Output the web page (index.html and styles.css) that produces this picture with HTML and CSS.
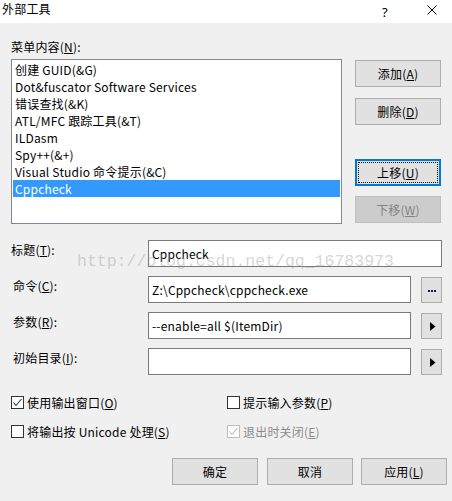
FILE: index.html
```html
<!DOCTYPE html>
<html lang="zh-CN">
<head>
    <meta charset="UTF-8">
    <title>外部工具</title>
    <link rel="stylesheet" href="styles.css">
</head>
<body>
    <div class="titlebar">
        <span class="title">外部工具</span>
        <span class="help">?</span>
        <span class="close">
            <svg width="10" height="10" viewBox="0 0 10 10"><path d="M0.5 0.5L9.5 9.5M9.5 0.5L0.5 9.5" stroke="#000" stroke-width="1"/></svg>
        </span>
    </div>

    <div class="content">
        <div class="menu-label">菜单内容(<u>N</u>):</div>
        <div class="menu-row">
            <ul class="listbox">
                <li>创建 GUID(&amp;G)</li>
                <li>Dot&amp;fuscator Software Services</li>
                <li>错误查找(&amp;K)</li>
                <li>ATL/MFC 跟踪工具(&amp;T)</li>
                <li>ILDasm</li>
                <li>Spy++(&amp;+)</li>
                <li>Visual Studio 命令提示(&amp;C)</li>
                <li class="selected">Cppcheck</li>
            </ul>
            <div class="side-buttons">
                <button class="btn">添加(<u>A</u>)</button>
                <button class="btn btn-del">删除(<u>D</u>)</button>
                <button class="btn btn-up default">上移(<u>U</u>)</button>
                <button class="btn btn-down" disabled>下移(<u>W</u>)</button>
            </div>
        </div>

        <div class="fields">
            <label class="field-label first">标题(<u>T</u>):</label>
            <div class="textbox wide">Cppcheck</div>

            <label class="field-label">命令(<u>C</u>):</label>
            <div class="textbox">Z:\Cppcheck\cppcheck.exe</div>
            <button class="mini-btn">
                <svg width="8" height="2" viewBox="0 0 8 2"><rect x="0" y="0" width="2" height="2" fill="#1a1a3a"/><rect x="3" y="0" width="2" height="2" fill="#1a1a3a"/><rect x="6" y="0" width="2" height="2" fill="#1a1a3a"/></svg>
            </button>

            <label class="field-label">参数(<u>R</u>):</label>
            <div class="textbox">--enable=all $(ItemDir)</div>
            <button class="mini-btn arrow">
                <svg width="6" height="9" viewBox="0 0 6 9"><path d="M0 0L5.5 4.5L0 9Z" fill="#000"/></svg>
            </button>

            <label class="field-label">初始目录(<u>I</u>):</label>
            <div class="textbox"></div>
            <button class="mini-btn arrow">
                <svg width="6" height="9" viewBox="0 0 6 9"><path d="M0 0L5.5 4.5L0 9Z" fill="#000"/></svg>
            </button>

            <span class="watermark">http://blog.csdn.net/qq_16783973</span>
        </div>

        <div class="options">
            <div class="check">
                <span class="box"><svg width="11" height="11" viewBox="0 0 11 11"><path d="M1.5 5.5L4 8.5L9.5 2" fill="none" stroke="#333" stroke-width="1.1"/></svg></span>
                使用输出窗口(<u>O</u>)
            </div>
            <div class="check">
                <span class="box"></span>
                提示输入参数(<u>P</u>)
            </div>
            <div class="check">
                <span class="box"></span>
                将输出按 Unicode 处理(<u>S</u>)
            </div>
            <div class="check disabled">
                <span class="box"><svg width="11" height="11" viewBox="0 0 11 11"><path d="M1.5 5.5L4 8.5L9.5 2" fill="none" stroke="#bcbcbc" stroke-width="1.1"/></svg></span>
                退出时关闭(<u>E</u>)
            </div>
        </div>

        <div class="footer">
            <button class="btn ok">确定</button>
            <button class="btn">取消</button>
            <button class="btn">应用(<u>L</u>)</button>
        </div>
    </div>
</body>
</html>
```

FILE: styles.css
```css
*{
    margin: 0;
    padding: 0;
    box-sizing: border-box;
}
body{
    width: 452px;
    height: 501px;
    overflow: hidden;
    background: #f0f0f0;
    color: #000;
    font: 12px "Noto Sans CJK SC", "Noto Sans", sans-serif;
    letter-spacing: 0.2px;
}
u{
    text-underline-offset: 1px;
}

/* title bar */
.titlebar{
    height: 23px;
    background: #fff;
    display: flex;
}
.title{
    flex: 1;
    padding: 2px 0 0 2px;
    line-height: 14px;
}
.help{
    width: 8px;
    padding-top: 3px;
    line-height: 14px;
    font: 13px "Noto Sans", sans-serif;
}
.close{
    width: 10px;
    margin: 5px 15px 0 37px;
}
.close svg{
    display: block;
}

.content{
    padding: 15px 11px 0;
}
.menu-label{
    height: 17px;
    line-height: 17px;
}

/* list + side buttons */
.menu-row{
    display: flex;
    margin-top: 4px;
}
.listbox{
    width: 331px;
    height: 165px;
    border: 1px solid #828790;
    background: #fff;
    padding: 1px;
    list-style: none;
}
.listbox li{
    height: 17px;
    line-height: 17px;
    padding-left: 2px;
    white-space: nowrap;
}
.listbox .selected{
    background: #3399ff;
    color: #fff;
}
.side-buttons{
    display: flex;
    flex-direction: column;
    width: 86px;
    margin-left: 13px;
    padding-top: 1px;
}
.btn{
    width: 86px;
    height: 27px;
    border: 1px solid #adadad;
    background: #e1e1e1;
    color: #000;
    font: inherit;
    letter-spacing: inherit;
}
.btn-del{
    margin-top: 11px;
}
.btn-up{
    margin-top: 34px;
}
.btn-down{
    margin-top: 10px;
}
.btn.default{
    border: 2px solid #0078d7;
    outline: 1px dotted #000;
    outline-offset: -4px;
}
.btn:disabled{
    background: #cccccc;
    border-color: #bfbfbf;
    color: #838383;
}

/* fields */
.fields{
    position: relative;
    display: grid;
    grid-template-columns: 137px 263px 31px;
    grid-auto-rows: 27px;
    row-gap: 9px;
    margin-top: 16px;
}
.field-label{
    align-self: start;
    margin-top: 1px;
    padding-left: 2px;
    line-height: 17px;
}
.field-label.first{
    padding-left: 0;
}
.textbox{
    border: 1px solid #7a7a7a;
    background: #fff;
    padding-left: 3px;
    line-height: 25px;
    white-space: nowrap;
}
.textbox.wide{
    grid-column: 2 / 4;
}
.mini-btn{
    justify-self: end;
    align-self: end;
    width: 21px;
    height: 26px;
    border: 1px solid #adadad;
    background: #e1e1e1;
    display: flex;
    align-items: flex-end;
    justify-content: center;
    padding-bottom: 10px;
}
.mini-btn.arrow{
    align-items: center;
    padding: 0 0 0 2px;
}
.mini-btn svg{
    display: block;
}
.watermark{
    position: absolute;
    left: 66px;
    top: 14px;
    font: 16.5px/16.5px "Liberation Mono", monospace;
    letter-spacing: 0;
    color: rgba(150, 150, 150, 0.4);
    white-space: nowrap;
    pointer-events: none;
}

/* checkboxes */
.options{
    display: grid;
    grid-template-columns: 216px auto;
    row-gap: 12px;
    margin-top: 19px;
}
.check{
    display: flex;
    align-items: center;
    height: 17px;
    white-space: nowrap;
}
.box{
    width: 13px;
    height: 13px;
    border: 1px solid #333;
    background: #fff;
    margin-right: 3px;
}
.box svg{
    display: block;
}
.check.disabled{
    color: #8c8c8c;
}
.check.disabled .box{
    border-color: #bcbcbc;
}

/* bottom buttons */
.footer{
    display: flex;
    justify-content: flex-end;
    gap: 8px;
    margin: 18px -6px 0 0;
}
.footer .ok{
    margin-right: 1px;
}
```
